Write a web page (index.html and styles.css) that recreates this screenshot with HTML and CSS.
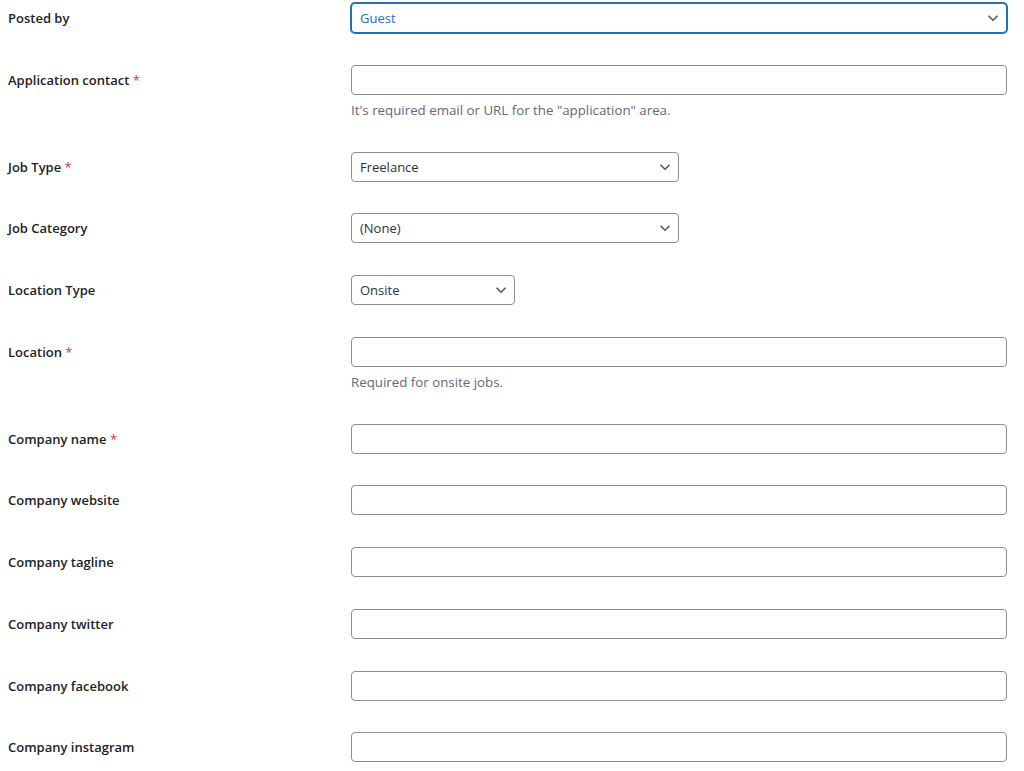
FILE: index.html
```html
<!DOCTYPE html>
<html lang="en">
<head>
  <meta charset="UTF-8">
  <title>Job listing data</title>
  <link rel="stylesheet" href="styles.css">
</head>
<body>
  <div class="job-fields">
    <div class="row">
      <label class="lbl">Posted by</label>
      <div class="field">
        <div class="sel sel-full focus">
          <select><option>Guest</option></select>
          <svg class="chev" width="12" height="8" viewBox="0 0 12 8"><path d="M1.5 1.8 6 6.2 10.5 1.8" fill="none" stroke="currentColor" stroke-width="1.6"/></svg>
        </div>
      </div>
    </div>
    <div class="row">
      <label class="lbl">Application contact <span class="req">*</span></label>
      <div class="field">
        <input type="text">
        <p class="desc">It's required email or URL for the "application" area.</p>
      </div>
    </div>
    <div class="row">
      <label class="lbl">Job Type <span class="req">*</span></label>
      <div class="field">
        <div class="sel sel-half">
          <select><option>Freelance</option></select>
          <svg class="chev" width="12" height="8" viewBox="0 0 12 8"><path d="M1.5 1.8 6 6.2 10.5 1.8" fill="none" stroke="currentColor" stroke-width="1.6"/></svg>
        </div>
      </div>
    </div>
    <div class="row">
      <label class="lbl">Job Category</label>
      <div class="field">
        <div class="sel sel-half">
          <select><option>(None)</option></select>
          <svg class="chev" width="12" height="8" viewBox="0 0 12 8"><path d="M1.5 1.8 6 6.2 10.5 1.8" fill="none" stroke="currentColor" stroke-width="1.6"/></svg>
        </div>
      </div>
    </div>
    <div class="row">
      <label class="lbl">Location Type</label>
      <div class="field">
        <div class="sel sel-quarter">
          <select><option>Onsite</option></select>
          <svg class="chev" width="12" height="8" viewBox="0 0 12 8"><path d="M1.5 1.8 6 6.2 10.5 1.8" fill="none" stroke="currentColor" stroke-width="1.6"/></svg>
        </div>
      </div>
    </div>
    <div class="row">
      <label class="lbl">Location <span class="req">*</span></label>
      <div class="field">
        <input type="text">
        <p class="desc">Required for onsite jobs.</p>
      </div>
    </div>
    <div class="row">
      <label class="lbl">Company name <span class="req">*</span></label>
      <div class="field"><input type="text"></div>
    </div>
    <div class="row">
      <label class="lbl">Company website</label>
      <div class="field"><input type="text"></div>
    </div>
    <div class="row">
      <label class="lbl">Company tagline</label>
      <div class="field"><input type="text"></div>
    </div>
    <div class="row">
      <label class="lbl">Company twitter</label>
      <div class="field"><input type="text"></div>
    </div>
    <div class="row">
      <label class="lbl">Company facebook</label>
      <div class="field"><input type="text"></div>
    </div>
    <div class="row">
      <label class="lbl">Company instagram</label>
      <div class="field"><input type="text"></div>
    </div>
  </div>
</body>
</html>
```

FILE: styles.css
```css
body { margin: 0; background: #fff; color: #1d2327; font-family: "Open Sans", "Noto Sans", sans-serif; font-size: 13px; overflow: hidden; }
.job-fields { display: flex; flex-direction: column; gap: 31.75px; padding: 3px 17px 0 8px; }
.row { display: flex; align-items: flex-start; }
.lbl { width: 343px; flex: none; font-weight: 600; line-height: 30px; color: #1d2327; }
.req { color: #d63638; font-weight: 400; }
.field { flex: 1; }
input[type=text], select { box-sizing: border-box; display: block; width: 100%; height: 30px; margin: 0; padding: 0 8px; border: 1px solid #8c8f94; border-radius: 4px; background: #fff; font: inherit; font-size: 13px; color: #2c3338; outline: none; }
select { appearance: none; -webkit-appearance: none; padding-right: 28px; }
.sel { position: relative; }
.sel-full { width: 100%; }
.sel-half { width: 328px; }
.sel-quarter { width: 164px; }
.chev { position: absolute; right: 8px; top: 11px; color: #50575e; }
.focus select { border-color: #2271b1; box-shadow: 0 0 0 1px #2271b1; color: #2271b1; }
.desc { margin: 5px 0 0; line-height: 20px; font-size: 13.3px; color: #646970; }
```
